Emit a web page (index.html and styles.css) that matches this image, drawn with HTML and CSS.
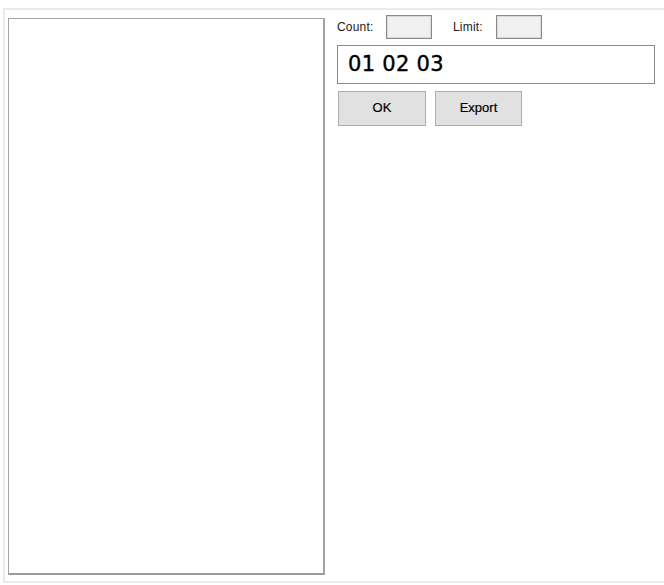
FILE: index.html
```html
<!DOCTYPE html>
<html>
<head>
<meta charset="utf-8">
<link rel="stylesheet" href="styles.css">
</head>
<body>
<div class="frame">
  <div class="listbox"></div>
  <div class="side">
    <div class="row1">
      <span class="lbl lbl-count">Count:</span>
      <div class="smallbox"></div>
      <span class="lbl lbl-limit">Limit:</span>
      <div class="smallbox"></div>
    </div>
    <div class="field">01 02 03</div>
    <div class="buttons">
      <div class="btn btn-ok">OK</div>
      <div class="btn btn-export">Export</div>
    </div>
  </div>
</div>
</body>
</html>
```
FILE: styles.css
```css
html, body {
  margin: 0;
  padding: 0;
  background: #ffffff;
  width: 664px;
  height: 585px;
  overflow: hidden;
}
.frame {
  margin: 8px 0 0 3px;
  width: 661px;
  height: 575px;
  box-sizing: border-box;
  border-top: 2px solid #ebebeb;
  border-left: 2px solid #ebebeb;
  border-bottom: 2px solid #ebebeb;
  display: flex;
  align-items: flex-start;
  padding: 5px 0 0 3px;
  font-family: "Liberation Sans", Arial, sans-serif;
}
.listbox {
  margin-top: 3px;
  width: 317px;
  height: 557px;
  box-sizing: border-box;
  border: 1px solid #a3a3ab;
  border-right: 2px solid #a3a3ab;
  border-bottom: 2px solid #9a9aa3;
  background: #fff;
}
.side {
  margin-left: 12px;
  display: flex;
  flex-direction: column;
}
.row1 {
  display: flex;
  align-items: center;
  height: 24px;
}
.lbl {
  font-size: 12px;
  color: #1a1a1a;
  letter-spacing: 0.2px;
}
.lbl-count { width: 49px; }
.lbl-limit { margin-left: 21px; width: 43px; }
.smallbox {
  width: 46px;
  height: 24px;
  box-sizing: border-box;
  border: 1px solid #8a8a8a;
  box-shadow: inset 0 0 0 1px #d9d9d9;
  background: #f0f0f0;
}
.field {
  margin-top: 6px;
  width: 318px;
  height: 39px;
  box-sizing: border-box;
  border: 1px solid #8a8a8a;
  font-family: "DejaVu Sans", Verdana, sans-serif;
  font-size: 21px;
  line-height: 37px;
  padding-left: 10px;
  color: #000;
  letter-spacing: 0.3px;
  -webkit-text-stroke: 0.4px #000;
}
.buttons {
  margin-top: 7px;
  display: flex;
  gap: 9px;
  padding-left: 1px;
}
.btn {
  height: 35px;
  box-sizing: border-box;
  border: 1px solid #adadad;
  background: #e1e1e1;
  font-size: 13px;
  color: #000;
  display: flex;
  align-items: center;
  justify-content: center;
  padding-bottom: 2px;
  -webkit-text-stroke: 0.2px #000;
}
.btn-ok { width: 88px; }
.btn-export { width: 87px; }
```
